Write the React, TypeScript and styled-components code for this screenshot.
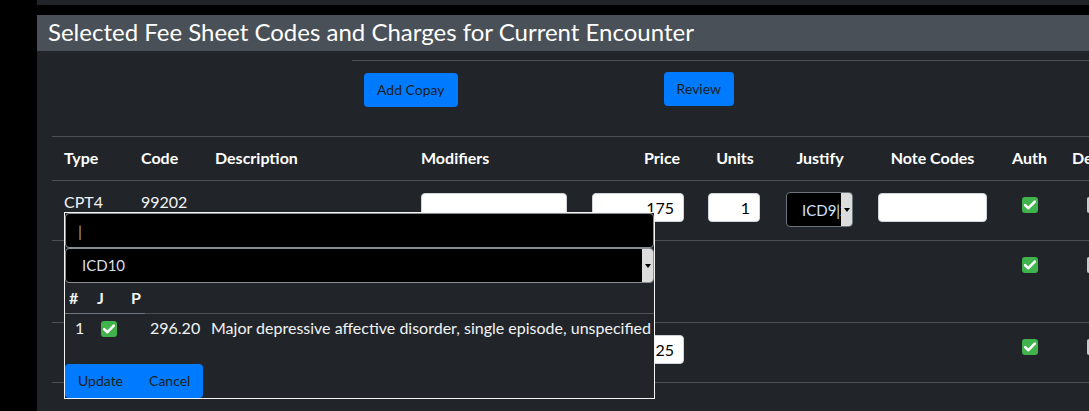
import styled, { createGlobalStyle } from "styled-components";

const GlobalStyle = createGlobalStyle`
	html, body {
		margin: 0;
		padding: 0;
		background: #000;
		overflow: hidden;
		font-family: Lato, "Liberation Sans", sans-serif;
	}
`;

const COLS = "77px 74px 206px 171px 116px 78px 92px 133px 61px 80px";

const Check = () => (
	<Box>
		<svg width="12" height="10" viewBox="0 0 12 10">
			<path d="M1.2 5.2 L4.4 8.2 L10.8 1.6" stroke="#fff" strokeWidth="2.6" fill="none" strokeLinecap="round" strokeLinejoin="round" />
		</svg>
	</Box>
);

const Arrow = () => (
	<ArrowBox>
		<svg width="6" height="4" viewBox="0 0 6 4">
			<path d="M0 0 L6 0 L3 4 Z" fill="#000" />
		</svg>
	</ArrowBox>
);

export const App = () => {
	return (
		<Page>
			<GlobalStyle />
			<TopStrip />
			<TitleBar>Selected Fee Sheet Codes and Charges for Current Encounter</TitleBar>
			<Body>
				<ButtonBar>
					<Button>Add Copay</Button>
					<Button $narrow>Review</Button>
				</ButtonBar>
				<Table>
					<HeadRow>
						<Th>Type</Th>
						<Th>Code</Th>
						<Th>Description</Th>
						<Th>Modifiers</Th>
						<Th $align="right">Price</Th>
						<Th $align="center">Units</Th>
						<Th $align="center">Justify</Th>
						<Th $align="center">Note Codes</Th>
						<Th $align="center">Auth</Th>
						<Th>Delete</Th>
					</HeadRow>
					<Row>
						<Td>CPT4</Td>
						<Td>99202</Td>
						<Td />
						<Td><Input $w={146} /></Td>
						<Td><Input $w={92} $right defaultValue="175" /></Td>
						<Td><Input $w={52} $right defaultValue="1" /></Td>
						<Td>
							<Select>
								<SelectText>ICD9|2</SelectText>
								<Arrow />
							</Select>
						</Td>
						<Td><Input $w={109} /></Td>
						<Td $align="center"><Check /></Td>
						<Td><GreyBox /></Td>
					</Row>
					<Row $h={82}>
						<Td />
						<Td />
						<Td />
						<Td />
						<Td />
						<Td />
						<Td />
						<Td />
						<Td $align="center"><Check /></Td>
						<Td><GreyBox /></Td>
					</Row>
					<Row>
						<Td />
						<Td />
						<Td />
						<Td />
						<Td><Input $w={92} $right defaultValue="25" /></Td>
						<Td />
						<Td />
						<Td />
						<Td $align="center"><Check /></Td>
						<Td><GreyBox /></Td>
					</Row>

					<Popup>
						<Search placeholder="|" />
						<Picker>
							<PickerText>ICD10</PickerText>
							<Arrow />
						</Picker>
						<MiniHead>
							<MiniTh>#</MiniTh>
							<MiniTh>J</MiniTh>
							<MiniTh>P</MiniTh>
							<MiniTh $plain />
							<MiniTh $plain />
						</MiniHead>
						<MiniRow>
							<MiniTd $pad={10}>1</MiniTd>
							<MiniTd $pad={8}><Check /></MiniTd>
							<MiniTd />
							<MiniTd $pad={5}>296.20</MiniTd>
							<MiniTd $pad={5}>Major depressive affective disorder, single episode, unspecified</MiniTd>
						</MiniRow>
						<Actions>
							<ActionButton>Update</ActionButton>
							<ActionButton>Cancel</ActionButton>
						</Actions>
					</Popup>
				</Table>
			</Body>
		</Page>
	);
};

export default App;

const Page = styled.div`
	padding-left: 37px;
	height: 411px;
	overflow: hidden;
`;

const TopStrip = styled.div`
	height: 5px;
	background: #212529;
	margin-bottom: 10px;
`;

const TitleBar = styled.div`
	height: 36px;
	line-height: 33px;
	background: #495057;
	color: #fff;
	font-size: 24px;
	padding-left: 11px;
	white-space: nowrap;
`;

const Body = styled.div`
	background: #212529;
	height: 400px;
	padding-top: 9px;
	box-sizing: border-box;
`;

const ButtonBar = styled.div`
	margin-left: 315px;
	border-top: 1px solid #4d5156;
	height: 76px;
	display: flex;
	align-items: flex-start;
	gap: 206px;
	padding: 12px 0 0 12px;
	box-sizing: border-box;
`;

const Button = styled.div<{ $narrow?: boolean }>`
	background: #007bff;
	color: #1b1e21;
	font-size: 14px;
	height: 34px;
	line-height: 34px;
	padding: 0 13px;
	border-radius: 4px;
	margin-top: ${(p) => (p.$narrow ? "-1px" : "0")};
`;

const Table = styled.div`
	position: relative;
	margin-left: 15px;
	width: 1200px;
	border-top: 1px solid #4d5156;
	color: #f1f3f5;
	font-size: 16px;
`;

const HeadRow = styled.div`
	display: grid;
	grid-template-columns: ${COLS};
	border-bottom: 1px solid #4d5156;
	font-weight: bold;
	color: #fff;
`;

const Th = styled.div<{ $align?: string }>`
	padding: 11px ${(p) => (p.$align === "right" ? "16px" : "12px")} 13px 12px;
	line-height: 19px;
	text-align: ${(p) => p.$align || "left"};
	white-space: nowrap;
	overflow: hidden;
`;

const Row = styled.div<{ $h?: number }>`
	display: grid;
	grid-template-columns: ${COLS};
	border-bottom: 1px solid #4d5156;
	height: ${(p) => p.$h || 60}px;
	box-sizing: border-box;
`;

const Td = styled.div<{ $align?: string }>`
	padding: 12px;
	line-height: 18px;
	display: flex;
	justify-content: ${(p) => (p.$align === "center" ? "center" : "flex-start")};
	align-items: flex-start;
`;

const Input = styled.input<{ $w: number; $right?: boolean }>`
	width: ${(p) => p.$w}px;
	height: 29px;
	box-sizing: border-box;
	border: 1px solid #ced4da;
	border-radius: 4px;
	background: #fff;
	color: #000;
	font-family: Lato, "Liberation Sans", sans-serif;
	font-size: 16px;
	text-align: ${(p) => (p.$right ? "right" : "left")};
	padding: 0 9px;
	margin: 0;
`;

const Select = styled.div`
	width: 67px;
	height: 35px;
	margin-top: -1px;
	box-sizing: border-box;
	background: #000;
	border: 1px solid #6c757d;
	border-radius: 4px;
	display: flex;
	align-items: center;
	overflow: hidden;
	padding-left: 15px;
`;

const SelectText = styled.span`
	flex: 1;
	overflow: hidden;
	white-space: nowrap;
	color: #cfe2ff;
	font-size: 15px;
`;

const ArrowBox = styled.span`
	width: 11px;
	align-self: stretch;
	background: #dcdcdc;
	display: flex;
	align-items: center;
	justify-content: center;
`;

const Box = styled.span`
	width: 16px;
	height: 16px;
	margin-top: 4px;
	border-radius: 3px;
	background: #40b34c;
	display: inline-flex;
	align-items: center;
	justify-content: center;
`;

const GreyBox = styled.span`
	width: 16px;
	height: 16px;
	margin: 4px 0 0 15px;
	border-radius: 2px;
	background: #c8cbcf;
`;

const Popup = styled.div`
	position: absolute;
	left: 12px;
	top: 75px;
	width: 591px;
	height: 187px;
	box-sizing: border-box;
	border: 1px solid #f4f4f4;
	background: #212529;
	display: flex;
	flex-direction: column;
	z-index: 2;
`;

const Search = styled.input`
	height: 35px;
	box-sizing: border-box;
	background: #000;
	border: 1px solid #8a8f94;
	border-radius: 4px;
	padding: 0 12px;
	font-family: Lato, "Liberation Sans", sans-serif;
	font-size: 16px;
	margin: 0;

	&::placeholder {
		color: #a0a0a0;
	}
`;

const Picker = styled.div`
	height: 35px;
	box-sizing: border-box;
	background: #000;
	border: 1px solid #8a8f94;
	border-radius: 4px;
	display: flex;
	align-items: stretch;
	overflow: hidden;
`;

const PickerText = styled.span`
	flex: 1;
	padding-left: 16px;
	line-height: 33px;
	font-size: 15px;
	color: #d8dee6;
`;

const MINI = "28px 34px 18px 61px 1fr";

const MiniHead = styled.div`
	display: grid;
	grid-template-columns: ${MINI};
	height: 30px;
	border-bottom: 1px solid #4d5156;
	font-weight: bold;
`;

const MiniTh = styled.div<{ $plain?: boolean }>`
	padding-left: 4px;
	line-height: 30px;
	border-bottom: 1px solid ${(p) => (p.$plain ? "transparent" : "#6c757d")};
	margin-bottom: -1px;
	white-space: nowrap;
`;

const MiniRow = styled.div`
	display: grid;
	grid-template-columns: ${MINI};
	padding-top: 4px;
	white-space: nowrap;
`;

const MiniTd = styled.div<{ $pad?: number }>`
	padding-left: ${(p) => p.$pad || 0}px;
	line-height: 19px;

	& > span {
		margin-top: 3px;
	}
`;

const Actions = styled.div`
	margin-top: auto;
	align-self: flex-start;
	display: flex;
	background: #007bff;
	border-radius: 4px;
	height: 34px;
`;

const ActionButton = styled.div`
	color: #1b1e21;
	font-size: 14px;
	line-height: 34px;
	padding: 0 13px;
`;
